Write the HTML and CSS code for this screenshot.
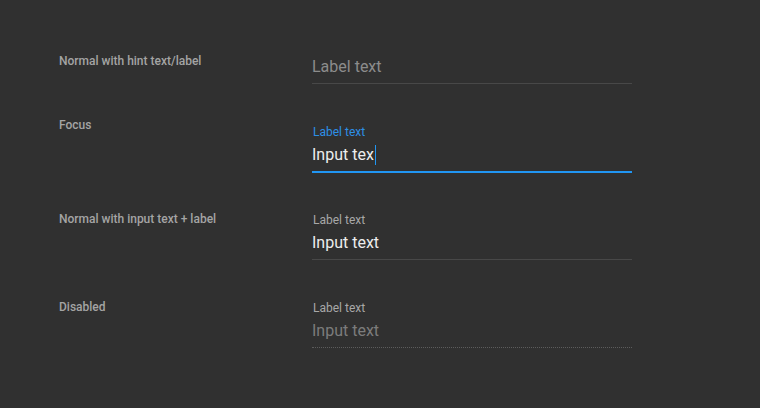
FILE: index.html
```html
<!DOCTYPE html>
<html lang="en">

<head>
    <meta charset="UTF-8">
    <meta name="viewport" content="width=device-width, initial-scale=1.0">
    <title>Text fields - dark</title>
    <link rel="stylesheet" href="styles.css">
</head>

<body>
    <div class="campos">
        <div class="fila fila-hint">
            <div class="nombre">Normal with hint text/label</div>
            <div class="campo">
                <div class="valor hint">Label text</div>
            </div>
        </div>

        <div class="fila fila-focus">
            <div class="nombre">Focus</div>
            <div class="campo focus">
                <div class="etiqueta">Label text</div>
                <div class="valor">Input tex<span class="cursor"></span></div>
            </div>
        </div>

        <div class="fila">
            <div class="nombre">Normal with input text + label</div>
            <div class="campo">
                <div class="etiqueta">Label text</div>
                <div class="valor">Input text</div>
            </div>
        </div>

        <div class="fila fila-disabled">
            <div class="nombre">Disabled</div>
            <div class="campo disabled">
                <div class="etiqueta">Label text</div>
                <div class="valor">Input text</div>
            </div>
        </div>
    </div>
</body>

</html>
```

FILE: styles.css
```css
body {
    font-family: Roboto, "Liberation Sans", Arial, sans-serif;
    margin: 0;
    padding: 0;
    min-height: 100vh;
    background-color: #303030;
}

.campos {
    display: flex;
    flex-direction: column;
    gap: 38px;
    padding: 53px 0 0 59px;
}

.fila {
    display: flex;
    align-items: flex-start;
}

.fila-hint {
    margin-bottom: -5px;
}

.fila-disabled {
    margin-top: 1px;
}

.nombre {
    width: 253px;
    font-size: 12px;
    line-height: 16px;
    font-weight: 500;
    color: #a4a4a4;
}

.campo {
    width: 320px;
    margin-top: 1px;
    border-bottom: 1px solid #484848;
}

.fila-hint .campo {
    margin-top: 2px;
}

.etiqueta {
    font-size: 12px;
    line-height: 16px;
    margin-bottom: 3px;
    padding-left: 1px;
    color: #a8a8a8;
}

.valor {
    font-size: 16px;
    line-height: 24px;
    padding-bottom: 4px;
    color: #ededed;
}

.valor.hint {
    color: #8c8c8c;
}

.focus {
    margin-top: 7px;
    border-bottom: 2px solid #2196f3;
}

.focus .etiqueta {
    color: #2d8fe6;
}

.cursor {
    display: inline-block;
    width: 1px;
    height: 20px;
    margin-left: 1px;
    vertical-align: -5px;
    background-color: #2196f3;
}

.disabled {
    border-bottom: 1px dotted #5c5c5c;
}

.disabled .valor {
    color: #7c7c7c;
}
```
